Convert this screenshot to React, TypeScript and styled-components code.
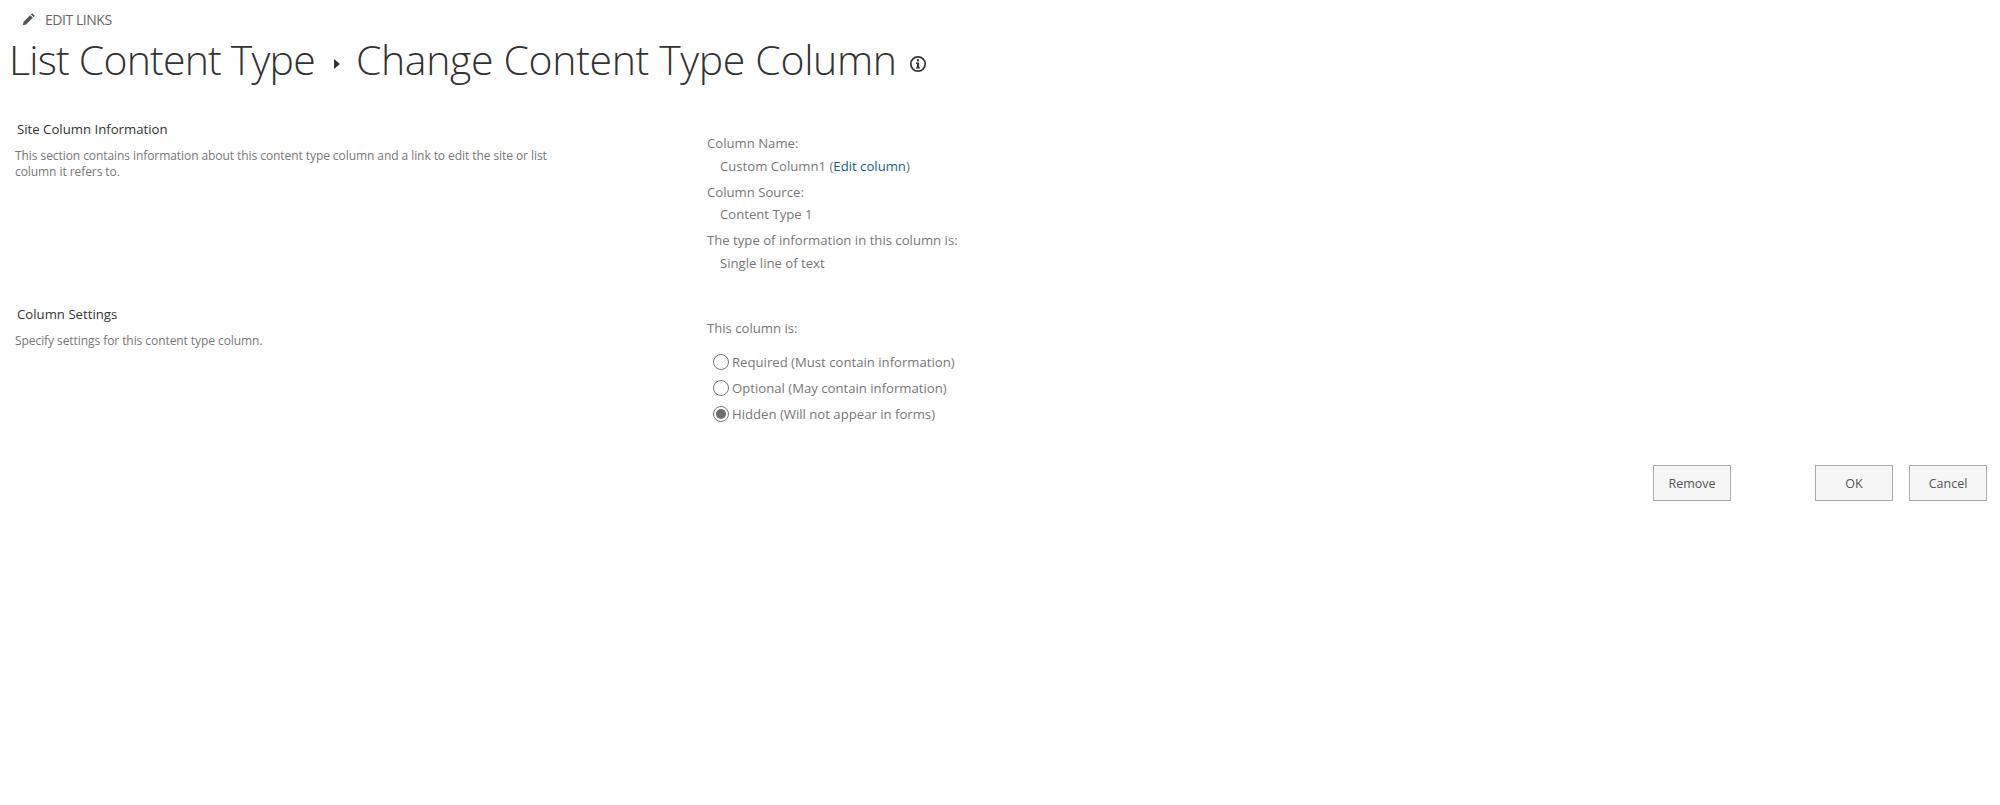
import * as React from 'react';
import styled, { createGlobalStyle } from 'styled-components';

const GlobalStyle = createGlobalStyle`
  html, body {
    margin: 0;
    padding: 0;
    background: #fff;
    font-family: "Open Sans", "Noto Sans", "Liberation Sans", sans-serif;
  }
`;

const Page = styled.div`
  width: 2000px;
  height: 805px;
  overflow: hidden;
  box-sizing: border-box;
  padding: 8px 13px 0 9px;
`;

const EditLinks = styled.a`
  display: flex;
  align-items: center;
  gap: 9px;
  height: 22px;
  padding-left: 13px;
  font-size: 14px;
  color: #666;
  letter-spacing: -0.45px;
`;

const TitleRow = styled.div`
  display: flex;
  align-items: center;
  height: 58px;
  margin-bottom: 31px;
`;

const Title = styled.h1<{ $tracking: number }>`
  margin: 0;
  font-size: 41px;
  font-weight: 300;
  color: #333;
  letter-spacing: ${(p) => p.$tracking}px;
  white-space: nowrap;
`;

const Crumb = styled.span`
  width: 0;
  height: 0;
  margin: 10px 16px 0 19px;
  border-left: 6px solid #333;
  border-top: 5px solid transparent;
  border-bottom: 5px solid transparent;
`;

const InfoIcon = styled.svg`
  width: 18px;
  height: 18px;
  margin: 10px 0 0 12px;
`;

const Section = styled.section<{ $height: number }>`
  display: grid;
  grid-template-columns: 698px 1fr;
  height: ${(p) => p.$height}px;
`;

const Side = styled.div`
  padding-left: 6px;
`;

const SectionTitle = styled.h3`
  margin: 0 0 9px 2px;
  font-size: 13.2px;
  line-height: 20px;
  font-weight: 400;
  color: #333;
`;

const Description = styled.p`
  margin: 0;
  width: 560px;
  font-size: 12px;
  line-height: 16px;
  letter-spacing: -0.07px;
  color: #777;
`;

const Label = styled.div<{ $gap?: number }>`
  font-size: 13.15px;
  line-height: 20px;
  color: #777;
  margin-top: ${(p) => p.$gap ?? 0}px;
`;

const Value = styled.div`
  font-size: 13.15px;
  line-height: 20px;
  color: #777;
  padding-left: 13px;
  margin-top: 2.5px;
`;

const EditLink = styled.a`
  color: #0f5f8a;
`;

const RadioList = styled.div`
  display: flex;
  flex-direction: column;
  gap: 6px;
  margin-top: 14px;
  padding-left: 6px;
`;

const RadioRow = styled.label`
  display: flex;
  align-items: center;
  gap: 3px;
  height: 20px;
  font-size: 13.15px;
  color: #777;
`;

const RadioCircle = styled.span<{ $checked?: boolean }>`
  position: relative;
  box-sizing: border-box;
  width: 16px;
  height: 16px;
  border: 1.5px solid #777;
  border-radius: 50%;
  &::after {
    content: '';
    display: ${(p) => (p.$checked ? 'block' : 'none')};
    position: absolute;
    inset: 2px;
    border-radius: 50%;
    background: #6e6e6e;
  }
`;

const ButtonBar = styled.div`
  display: flex;
  justify-content: flex-end;
  gap: 16px;
`;

const Button = styled.button<{ $spaced?: boolean }>`
  box-sizing: border-box;
  width: 78px;
  height: 36px;
  margin-right: ${(p) => (p.$spaced ? 68 : 0)}px;
  padding: 0;
  border: 1px solid #ababab;
  background: #f6f6f6;
  font-family: inherit;
  font-size: 12.5px;
  color: #555;
`;

const Pencil = () => (
  <svg width="14" height="14" viewBox="0 0 14 14" aria-hidden="true">
    <path d="M10.2 1.2l2.6 2.6-1.3 1.3-2.6-2.6zM8.2 3.2l2.6 2.6-6.6 6.6-3.4.8.8-3.4z" fill="#555" />
  </svg>
);

const Info = () => (
  <InfoIcon viewBox="0 0 18 18" aria-hidden="true">
    <circle cx="9" cy="9" r="7.2" fill="none" stroke="#333" strokeWidth="1.7" />
    <rect x="7.9" y="4.2" width="2.2" height="2.2" fill="#333" />
    <path d="M7 7.6h3.1v4.6h1v1.3H7v-1.3h1V8.9H7z" fill="#333" />
  </InfoIcon>
);

const radios = [
  { label: 'Required (Must contain information)' },
  { label: 'Optional (May contain information)' },
  { label: 'Hidden (Will not appear in forms)', checked: true },
];

const App = () => (
  <Page>
    <GlobalStyle />
    <EditLinks>
      <Pencil />
      EDIT LINKS
    </EditLinks>
    <TitleRow>
      <Title $tracking={-0.8}>List Content Type</Title>
      <Crumb />
      <Title $tracking={-0.35}>Change Content Type Column</Title>
      <Info />
    </TitleRow>
    <Section $height={185}>
      <Side>
        <SectionTitle>Site Column Information</SectionTitle>
        <Description>
          This section contains information about this content type column and a link to edit the site or list column
          it refers to.
        </Description>
      </Side>
      <div>
        <Label $gap={14}>Column Name:</Label>
        <Value>
          Custom Column1 (<EditLink>Edit column</EditLink>)
        </Value>
        <Label $gap={6}>Column Source:</Label>
        <Value>Content Type 1</Value>
        <Label $gap={6}>The type of information in this column is:</Label>
        <Value>Single line of text</Value>
      </div>
    </Section>
    <Section $height={161}>
      <Side>
        <SectionTitle>Column Settings</SectionTitle>
        <Description>Specify settings for this content type column.</Description>
      </Side>
      <div>
        <Label $gap={14}>This column is:</Label>
        <RadioList>
          {radios.map((r) => (
            <RadioRow key={r.label}>
              <RadioCircle $checked={r.checked} />
              {r.label}
            </RadioRow>
          ))}
        </RadioList>
      </div>
    </Section>
    <ButtonBar>
      <Button $spaced>Remove</Button>
      <Button>OK</Button>
      <Button>Cancel</Button>
    </ButtonBar>
  </Page>
);

export default App;
